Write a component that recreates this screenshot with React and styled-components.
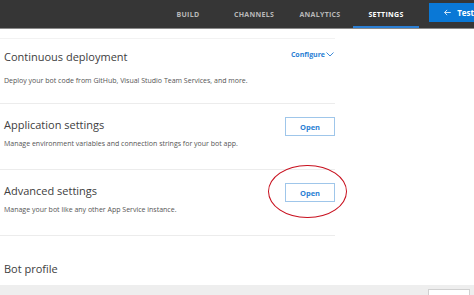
import React from 'react'
import styled, { createGlobalStyle } from 'styled-components'

const Global = createGlobalStyle`
  html, body {
    margin: 0;
    padding: 0;
    background: #fff;
    font-family: "Open Sans", "Noto Sans", sans-serif;
    overflow: hidden;
  }
`

const Page = styled.div`
  width: 474px;
  height: 295px;
  display: flex;
  flex-direction: column;
  overflow: hidden;
`

const TopBar = styled.header`
  height: 28px;
  flex: none;
  background: #363636;
  border-bottom: 1px solid #8a8a8a;
  display: flex;
  justify-content: flex-end;
  align-items: stretch;
  overflow: hidden;
`

const Tab = styled.div`
  width: 66px;
  display: flex;
  align-items: center;
  justify-content: center;
  font-size: 7px;
  font-weight: 700;
  letter-spacing: 0.3px;
  color: ${p => (p.active ? '#fff' : '#b9b9b9')};
  box-shadow: ${p => (p.active ? 'inset 0 -2px 0 #2b7fd4' : 'none')};
`

const TestButton = styled.div`
  margin: 3px 0 6px 10px;
  width: 45px;
  flex: none;
  background: #0a78d6;
  color: #fff;
  display: flex;
  align-items: center;
  gap: 6px;
  padding-left: 15px;
  box-sizing: border-box;
  font-size: 8px;
  font-weight: 700;
  white-space: nowrap;
  overflow: hidden;
`

const Main = styled.main`
  flex: 1;
  padding-top: 9px;
  display: flex;
  flex-direction: column;
`

const Section = styled.section`
  width: 331px;
  padding: ${p => p.top ?? 11}px 0 ${p => p.bottom ?? 20}px 4px;
  border-top: ${p => (p.first ? '1px solid #f2f2f2' : 'none')};
  border-bottom: ${p => (p.last ? 'none' : '1px solid #ececec')};
`

const Row = styled.div`
  height: 19px;
  display: flex;
  align-items: center;
  justify-content: space-between;
`

const Title = styled.h2`
  margin: 0;
  font-size: 11px;
  font-weight: 400;
  color: #404040;
`

const Desc = styled.p`
  margin: ${p => p.gap ?? 5}px 0 0;
  font-size: 7px;
  line-height: 10px;
  color: #555;
`

const LinkAction = styled.span`
  display: flex;
  align-items: center;
  gap: 1px;
  margin-right: 1px;
  font-size: 7px;
  font-weight: 700;
  color: #2b7fd4;
  margin-top: -4px;
`

const ButtonWrap = styled.div`
  position: relative;
`

const OpenButton = styled.button`
  width: 50px;
  height: 19px;
  box-sizing: border-box;
  border: 1px solid #9fc6ea;
  background: #fff;
  color: #2b7fd4;
  font-family: inherit;
  font-size: 7.5px;
  font-weight: 700;
  padding: 0;
`

const Circle = styled.div`
  position: absolute;
  left: -17px;
  right: -12px;
  top: -14px;
  bottom: -16px;
  border: 1.5px solid #c8101e;
  border-radius: 50%;
  pointer-events: none;
`

const Footer = styled.div`
  margin-top: auto;
  height: 10px;
  background: #eeeeee;
  display: flex;
  justify-content: flex-end;
  align-items: flex-end;
`

const FooterBox = styled.div`
  width: 40px;
  height: 5px;
  margin-right: 4px;
  background: #fff;
  border: 1px solid #d0d0d0;
  border-bottom: none;
`

const Chevron = () => (
  <svg width="8" height="5" viewBox="0 0 8 5">
    <path d="M0.5 0.5 L4 4 L7.5 0.5" fill="none" stroke="#2b7fd4" strokeWidth="0.9" />
  </svg>
)

const Arrow = () => (
  <svg width="8" height="7" viewBox="0 0 8 7">
    <path d="M7.5 3.5 H0.8 M3.5 0.6 L0.6 3.5 L3.5 6.4" fill="none" stroke="#fff" strokeWidth="0.9" />
  </svg>
)

const sections = [
  {
    title: 'Application settings',
    desc: 'Manage environment variables and connection strings for your bot app.'
  },
  {
    title: 'Advanced settings',
    desc: 'Manage your bot like any other App Service instance.',
    marked: true
  }
]

export default function App () {
  return (
    <Page>
      <Global />
      <TopBar>
        <Tab>BUILD</Tab>
        <Tab>CHANNELS</Tab>
        <Tab>ANALYTICS</Tab>
        <Tab active>SETTINGS</Tab>
        <TestButton>
          <Arrow />
          Test
        </TestButton>
      </TopBar>
      <Main>
        <Section first top={8} bottom={17}>
          <Row>
            <Title>Continuous deployment</Title>
            <LinkAction>
              Configure <Chevron />
            </LinkAction>
          </Row>
          <Desc gap={10}>Deploy your bot code from GitHub, Visual Studio Team Services, and more.</Desc>
        </Section>
        {sections.map(s => (
          <Section key={s.title}>
            <Row>
              <Title>{s.title}</Title>
              <ButtonWrap>
                <OpenButton>Open</OpenButton>
                {s.marked && <Circle />}
              </ButtonWrap>
            </Row>
            <Desc>{s.desc}</Desc>
          </Section>
        ))}
        <Section last top={23} bottom={0}>
          <Row>
            <Title>Bot profile</Title>
          </Row>
        </Section>
        <Footer>
          <FooterBox />
        </Footer>
      </Main>
    </Page>
  )
}
